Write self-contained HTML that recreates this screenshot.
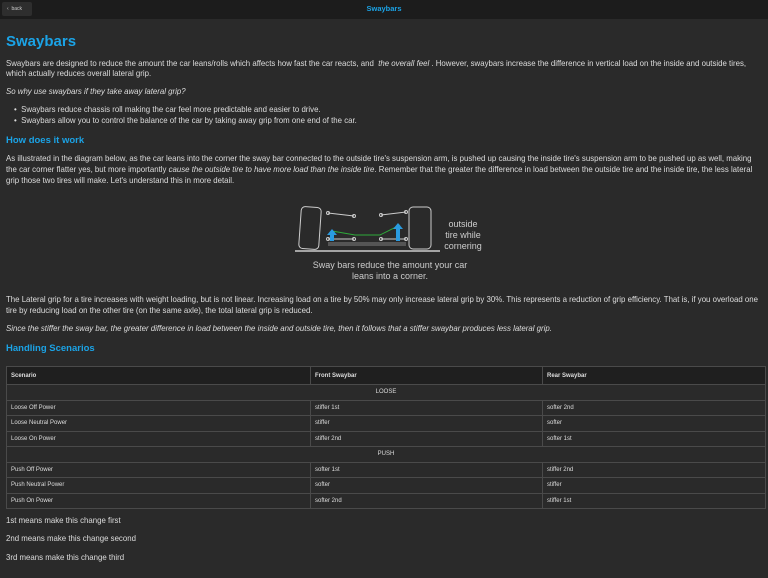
<!DOCTYPE html><html><head><style>
*{margin:0;padding:0;box-sizing:border-box}
body{width:768px;height:578px;background:#2a2a2a;color:#ddd;font-family:"Liberation Sans",sans-serif;font-size:7.85px;overflow:hidden;position:relative}
.hdr{position:absolute;left:0;top:0;width:768px;height:19px;background:#1c1c1c}
.back{position:absolute;left:2px;top:2px;width:30px;height:14px;background:#2e2e2e;border-radius:2px;color:#ccc;font-size:5px;line-height:14px;padding-left:5px}
.ttl{position:absolute;left:0;width:768px;top:4px;text-align:center;color:#1ba3e6;font-size:7.5px;font-weight:bold}
.a{position:absolute;left:6px;white-space:nowrap}
h1{position:absolute;left:6px;top:33px;font-size:15px;color:#1ba3e6;font-weight:bold}
h2{position:absolute;left:6px;font-size:9.5px;color:#1ba3e6;font-weight:bold}
i{font-style:italic}
table{position:absolute;left:6px;top:366px;width:760px;border-collapse:collapse;font-size:6px;color:#ddd}
td,th{border:1px solid #4a4a4a;height:15.5px;padding:0 4px;text-align:left;vertical-align:middle}
th{height:18px;background:#1f1f1f;font-weight:bold}
.c{text-align:center}
</style></head><body>
<div class="hdr"><div class="back">&#x2039;&nbsp; back</div><div class="ttl">Swaybars</div></div>
<h1>Swaybars</h1>
<div class="a" style="top:59px">Swaybars are designed to reduce the amount the car leans/rolls which affects how fast the car reacts, and &nbsp;<i>the overall feel</i> . However, swaybars increase the difference in vertical load on the inside and outside tires,</div>
<div class="a" style="top:69px">which actually reduces overall lateral grip.</div>
<div class="a" style="top:87px"><i>So why use swaybars if they take away lateral grip?</i></div>
<div class="a" style="top:105px;left:14px">•&nbsp; Swaybars reduce chassis roll making the car feel more predictable and easier to drive.</div>
<div class="a" style="top:116px;left:14px">•&nbsp; Swaybars allow you to control the balance of the car by taking away grip from one end of the car.</div>
<h2 style="top:135px">How does it work</h2>
<div class="a" style="top:154px">As illustrated in the diagram below, as the car leans into the corner the sway bar connected to the outside tire's suspension arm, is pushed up causing the inside tire's suspension arm to be pushed up as well, making</div>
<div class="a" style="top:165px">the car corner flatter yes, but more importantly <i>cause the outside tire to have more load than the inside tire</i>. Remember that the greater the difference in load between the outside tire and the inside tire, the less lateral</div>
<div class="a" style="top:176px">grip those two tires will make. Let's understand this in more detail.</div>
<svg style="position:absolute;left:280px;top:195px" width="220" height="90">
<g fill="none" stroke="#ccc" stroke-width="1">
<rect x="20" y="12" width="20" height="42" rx="4" transform="rotate(4 30 33)"/>
<rect x="129" y="12" width="22" height="42" rx="4"/>
<line x1="15" y1="56" x2="160" y2="56" stroke-width="1.5"/>
<path d="M48 18 L74 21 M101 20 L126 17 M48 44 L74 44 M101 44 L126 44"/>
<circle cx="48" cy="18" r="1.5"/><circle cx="74" cy="21" r="1.5"/><circle cx="101" cy="20" r="1.5"/><circle cx="126" cy="17" r="1.5"/>
<circle cx="48" cy="44" r="1.5"/><circle cx="74" cy="44" r="1.5"/><circle cx="101" cy="44" r="1.5"/><circle cx="126" cy="44" r="1.5"/>
</g>
<rect x="48" y="47" width="78" height="4" fill="#555"/>
<path d="M52 36 L75 40 L100 40 L120 30" stroke="#2eaa3a" fill="none" stroke-width="1"/>
<path d="M50 46 V40 H47 L52 34 L57 40 H54 V46Z M116 46 V34 H113 L118 28 L123 34 H120 V46Z" fill="#2a9be0"/>
<text x="183" y="32" fill="#ccc" font-size="9" text-anchor="middle" font-family="Liberation Sans">outside</text>
<text x="183" y="43" fill="#ccc" font-size="9" text-anchor="middle" font-family="Liberation Sans">tire while</text>
<text x="183" y="54" fill="#ccc" font-size="9" text-anchor="middle" font-family="Liberation Sans">cornering</text>
<text x="110" y="73" fill="#ccc" font-size="9" text-anchor="middle" font-family="Liberation Sans">Sway bars reduce the amount your car</text>
<text x="110" y="84" fill="#ccc" font-size="9" text-anchor="middle" font-family="Liberation Sans">leans into a corner.</text>
</svg>
<div class="a" style="top:295px">The Lateral grip for a tire increases with weight loading, but is not linear. Increasing load on a tire by 50% may only increase lateral grip by 30%. This represents a reduction of grip efficiency. That is, if you overload one</div>
<div class="a" style="top:306px">tire by reducing load on the other tire (on the same axle), the total lateral grip is reduced.</div>
<div class="a" style="top:324px"><i>Since the stiffer the sway bar, the greater difference in load between the inside and outside tire, then it follows that a stiffer swaybar produces less lateral grip.</i></div>
<h2 style="top:343px">Handling Scenarios</h2>
<table>
<tr><th style="width:304px">Scenario</th><th style="width:232px">Front Swaybar</th><th>Rear Swaybar</th></tr>
<tr><td colspan="3" class="c">LOOSE</td></tr>
<tr><td>Loose Off Power</td><td>stiffer 1st</td><td>softer 2nd</td></tr>
<tr><td>Loose Neutral Power</td><td>stiffer</td><td>softer</td></tr>
<tr><td>Loose On Power</td><td>stiffer 2nd</td><td>softer 1st</td></tr>
<tr><td colspan="3" class="c">PUSH</td></tr>
<tr><td>Push Off Power</td><td>softer 1st</td><td>stiffer 2nd</td></tr>
<tr><td>Push Neutral Power</td><td>softer</td><td>stiffer</td></tr>
<tr><td>Push On Power</td><td>softer 2nd</td><td>stiffer 1st</td></tr>
</table>
<div class="a" style="top:516px">1st means make this change first</div>
<div class="a" style="top:534px">2nd means make this change second</div>
<div class="a" style="top:553px">3rd means make this change third</div>
</body></html>
